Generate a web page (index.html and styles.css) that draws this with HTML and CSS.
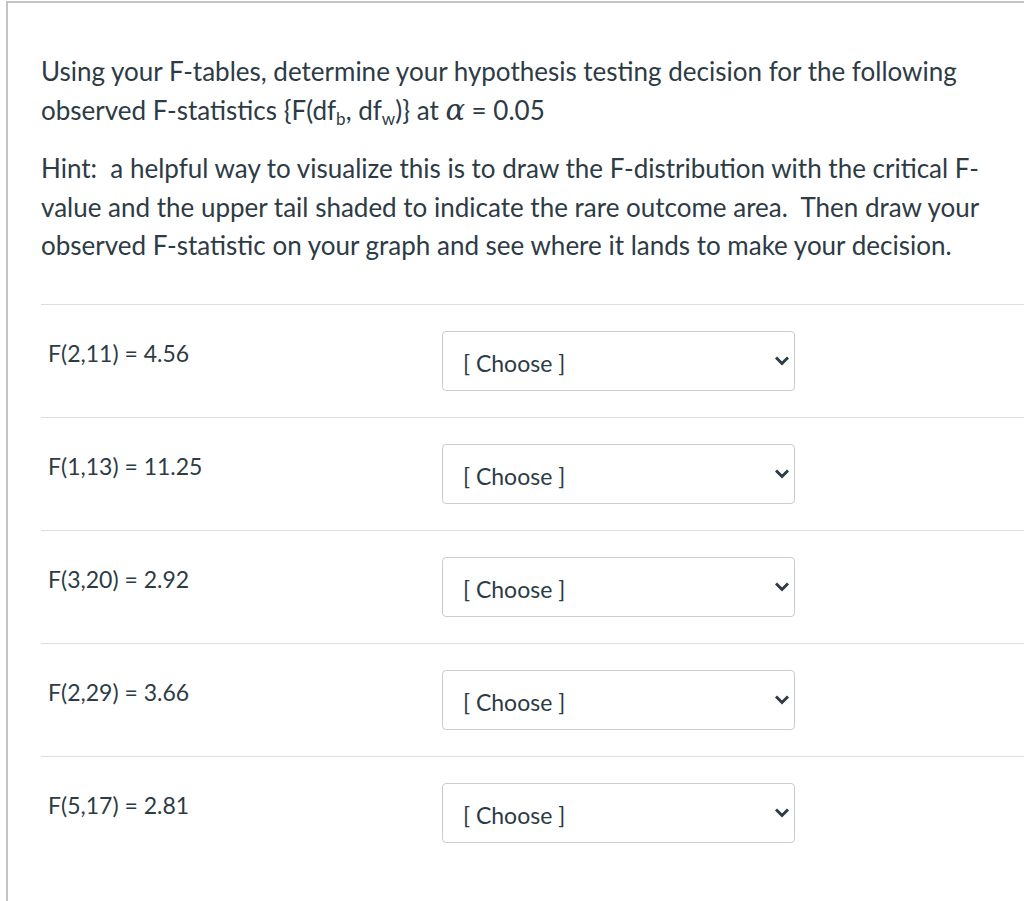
FILE: index.html
```html
<!DOCTYPE html>
<html>
<head>
<meta charset="utf-8">
<link rel="stylesheet" href="styles.css">
</head>
<body>
<div class="frame">
  <div class="content">
    <p class="q">Using your F-tables, determine your hypothesis testing decision for the following observed F-statistics {F(df<sub>b</sub>, df<sub>w</sub>)} at <span class="alpha">α</span> = 0.05</p>
    <p class="q">Hint:&nbsp; a helpful way to visualize this is to draw the F-distribution with the critical F-value and the upper tail shaded to indicate the rare outcome area.&nbsp; Then draw your observed F-statistic on your graph and see where it lands to make your decision.</p>
    <div class="rows">
      <div class="row">
        <div class="label">F(2,11) = 4.56</div>
        <div class="select"><span>[ Choose ]</span><svg class="chev" width="14" height="10" viewBox="0 0 14 10"><path d="M2 2.5 L7 7.5 L12 2.5" fill="none" stroke="#2d3b45" stroke-width="3" stroke-linecap="square"/></svg></div>
      </div>
      <div class="row">
        <div class="label">F(1,13) = 11.25</div>
        <div class="select"><span>[ Choose ]</span><svg class="chev" width="14" height="10" viewBox="0 0 14 10"><path d="M2 2.5 L7 7.5 L12 2.5" fill="none" stroke="#2d3b45" stroke-width="3" stroke-linecap="square"/></svg></div>
      </div>
      <div class="row">
        <div class="label">F(3,20) = 2.92</div>
        <div class="select"><span>[ Choose ]</span><svg class="chev" width="14" height="10" viewBox="0 0 14 10"><path d="M2 2.5 L7 7.5 L12 2.5" fill="none" stroke="#2d3b45" stroke-width="3" stroke-linecap="square"/></svg></div>
      </div>
      <div class="row">
        <div class="label">F(2,29) = 3.66</div>
        <div class="select"><span>[ Choose ]</span><svg class="chev" width="14" height="10" viewBox="0 0 14 10"><path d="M2 2.5 L7 7.5 L12 2.5" fill="none" stroke="#2d3b45" stroke-width="3" stroke-linecap="square"/></svg></div>
      </div>
      <div class="row">
        <div class="label">F(5,17) = 2.81</div>
        <div class="select"><span>[ Choose ]</span><svg class="chev" width="14" height="10" viewBox="0 0 14 10"><path d="M2 2.5 L7 7.5 L12 2.5" fill="none" stroke="#2d3b45" stroke-width="3" stroke-linecap="square"/></svg></div>
      </div>
    </div>
  </div>
</div>
</body>
</html>
```
FILE: styles.css
```css
html, body {
  margin: 0;
  padding: 0;
  background: #fff;
}
body {
  font-family: Lato, "Open Sans", sans-serif;
  color: #2d3b45;
  overflow: hidden;
  height: 901px;
}
.frame {
  margin-left: 6px;
  margin-top: 1px;
  border-left: 2px solid #c4c4c4;
  border-top: 2px solid #c4c4c4;
  height: 900px;
}
.content {
  padding-left: 33px;
  padding-top: 49px;
}
.q {
  margin: 0 0 20px 0;
  font-size: 26px;
  line-height: 38.5px;
  width: 950px;
}
.q sub {
  font-size: 17px;
  vertical-align: -5px;
  line-height: 0;
}
.alpha {
  font-family: "DejaVu Serif", serif;
  font-style: italic;
  font-size: 29px;
  line-height: 0;
}
.rows {
  margin-top: 39px;
}
.row {
  border-top: 1px solid #dddddd;
  height: 112px;
  display: flex;
  align-items: flex-start;
}
.label {
  font-size: 23px;
  padding-left: 7px;
  padding-top: 35px;
  width: 394px;
  line-height: 26px;
}
.select {
  position: relative;
  margin-top: 26px;
  width: 351px;
  height: 58px;
  border: 1px solid #c7cdd1;
  border-radius: 4px;
  box-sizing: content-box;
  display: flex;
  align-items: center;
}
.select span {
  font-size: 23px;
  padding-left: 20px;
  padding-top: 4px;
}
.chev {
  position: absolute;
  right: 5px;
  top: 24px;
}
```
